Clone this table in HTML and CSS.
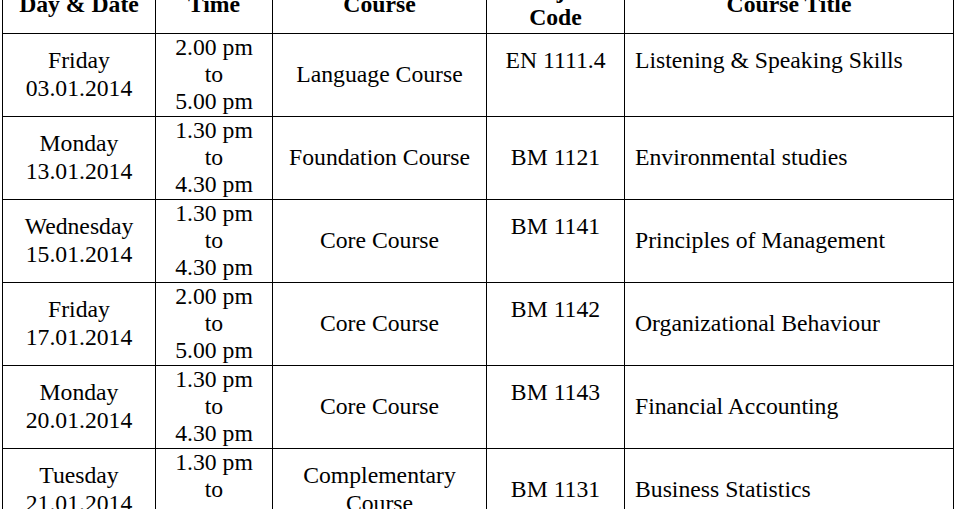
FILE: index.html
```html
<!DOCTYPE html>
<html lang="en">
<head>
<meta charset="utf-8">
<title>Examination Time Table</title>
<link rel="stylesheet" href="styles.css">
</head>
<body>
<table class="timetable">
  <colgroup>
    <col class="c-day">
    <col class="c-time">
    <col class="c-course">
    <col class="c-code">
    <col class="c-title">
  </colgroup>
  <thead>
    <tr>
      <th>Day &amp; Date</th>
      <th>Time</th>
      <th>Course</th>
      <th>Subject<br>Code</th>
      <th>Course Title</th>
    </tr>
  </thead>
  <tbody>
    <tr>
      <td>Friday<br>03.01.2014</td>
      <td>2.00 pm<br>to<br>5.00 pm</td>
      <td>Language Course</td>
      <td class="lifted">EN 1111.4</td>
      <td class="title lifted">Listening &amp; Speaking Skills</td>
    </tr>
    <tr>
      <td>Monday<br>13.01.2014</td>
      <td>1.30 pm<br>to<br>4.30 pm</td>
      <td>Foundation Course</td>
      <td>BM 1121</td>
      <td class="title">Environmental studies</td>
    </tr>
    <tr>
      <td>Wednesday<br>15.01.2014</td>
      <td>1.30 pm<br>to<br>4.30 pm</td>
      <td>Core Course</td>
      <td class="lifted">BM 1141</td>
      <td class="title">Principles of Management</td>
    </tr>
    <tr>
      <td>Friday<br>17.01.2014</td>
      <td>2.00 pm<br>to<br>5.00 pm</td>
      <td>Core Course</td>
      <td class="lifted">BM 1142</td>
      <td class="title">Organizational Behaviour</td>
    </tr>
    <tr>
      <td>Monday<br>20.01.2014</td>
      <td>1.30 pm<br>to<br>4.30 pm</td>
      <td>Core Course</td>
      <td class="lifted">BM 1143</td>
      <td class="title">Financial Accounting</td>
    </tr>
    <tr>
      <td>Tuesday<br>21.01.2014</td>
      <td>1.30 pm<br>to<br>4.30 pm</td>
      <td>Complementary<br>Course</td>
      <td>BM 1131</td>
      <td class="title">Business Statistics</td>
    </tr>
  </tbody>
</table>
</body>
</html>
```

FILE: styles.css
```css
html, body {
  margin: 0;
  padding: 0;
  background: #ffffff;
}

body {
  font-family: "Liberation Serif", "Times New Roman", serif;
  font-size: 23.7px;
  line-height: 27.3px;
  color: #000000;
  overflow: hidden;
}

.timetable {
  border-collapse: collapse;
  table-layout: fixed;
  width: 951px;
  margin: -24px 0 0 2px;
}

.c-day { width: 153px; }
.c-time { width: 117px; }
.c-course { width: 214px; }
.c-code { width: 138px; }
.c-title { width: 329px; }

.timetable th,
.timetable td {
  border: 1px solid #000000;
  padding: 0;
  text-align: center;
  vertical-align: middle;
}

.timetable th {
  font-weight: bold;
  padding-bottom: 1px;
}

.timetable tbody tr {
  height: 83px;
}

.timetable td.title {
  text-align: left;
  padding-left: 10px;
}

.timetable td.lifted {
  padding-bottom: 27px;
}
```
